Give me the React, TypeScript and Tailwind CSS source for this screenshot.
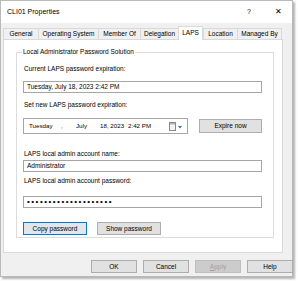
import React from "react"

const tabs = [
  { label: "General", w: "w-[35px]" },
  { label: "Operating System", w: "w-[60px]" },
  { label: "Member Of", w: "w-[42px]" },
  { label: "Delegation", w: "w-[38px]" },
  { label: "LAPS", w: "w-[25px]", active: true },
  { label: "Location", w: "w-[34px]" },
  { label: "Managed By", w: "w-[45px]" },
]

function CalendarIcon() {
  return (
    <svg width="14" height="9" viewBox="0 0 14 9" className="shrink-0">
      <rect x="0.5" y="0.5" width="6" height="8" fill="#f4f4f4" stroke="#8a8a8a" />
      <rect x="1" y="1" width="5" height="1.5" fill="#b5b5b5" />
      <path d="M9 4 L13 4 L11 6.5 Z" fill="#3c6ea8" />
    </svg>
  )
}

function Button({ children, w, primary, disabled }: { children: React.ReactNode; w: string; primary?: boolean; disabled?: boolean }) {
  return (
    <div
      className={`${w} h-[13px] flex items-center justify-center border text-[6.5px] leading-[8px] ${
        primary
          ? "border-[#0078d7] bg-[#e1e6ec]"
          : disabled
          ? "border-[#bfbfbf] bg-[#cccccc] text-[#a0a0a0]"
          : "border-[#adadad] bg-[#e1e1e1]"
      }`}
    >
      {children}
    </div>
  )
}

export default function App() {
  return (
    <div className="w-[300px] h-[283px] bg-white text-black" style={{ fontFamily: '"Liberation Sans", Arial, sans-serif' }}>
      <div className="w-[293px] h-[277px] flex flex-col border border-[#b9b9b9] shadow-[2px_2px_2px_rgba(0,0,0,0.3)]">
        {/* title bar */}
        <div className="h-[22px] bg-white flex items-center pl-[6px] pr-[10px]">
          <span className="text-[7px] leading-[8px]">CLI01 Properties</span>
          <span className="ml-auto text-[7px] leading-[8px] mr-[24px]">?</span>
          <span className="text-[8px] leading-[8px] font-light">✕</span>
        </div>

        {/* body */}
        <div className="flex-1 bg-[#f0f0f0] pl-[2px] pt-[3px] flex flex-col">
          <div className="flex items-end h-[13px]">
            {tabs.map((t) =>
              t.active ? (
                <div
                  key={t.label}
                  className={`${t.w} h-[14px] -mb-[1px] relative z-10 bg-white border border-b-0 border-[#d9d9d9] flex items-center justify-center text-[6.5px] leading-[8px] pb-[2px]`}
                >
                  {t.label}
                </div>
              ) : (
                <div
                  key={t.label}
                  className={`${t.w} h-[11px] bg-[#f0f0f0] border border-b-0 border-r-0 last:border-r border-[#d9d9d9] flex items-center justify-center text-[6.5px] leading-[8px]`}
                >
                  {t.label}
                </div>
              )
            )}
          </div>

          {/* tab panel */}
          <div className="w-[280px] h-[214px] bg-white border border-[#d9d9d9] pl-[12px] pt-[8px]">
            <fieldset className="w-[258px] h-[190px] border border-[#dcdcdc] pl-[6px] pr-[11px]">
              <legend className="ml-[-1px] px-[1px] text-[6.5px] leading-[8px]">Local Administrator Password Solution</legend>

              <div className="mt-[9px] text-[6.5px] leading-[8px] pl-[1px]">Current LAPS password expiration:</div>
              <div className="mt-[8px] h-[12px] border border-[#a6a6a6] flex items-center pl-[3px] text-[6.5px] leading-[8px]">
                Tuesday, July 18, 2023 2:42 PM
              </div>

              <div className="mt-[8px] text-[6.5px] leading-[8px] pl-[1px]">Set new LAPS password expiration:</div>
              <div className="mt-[9px] flex items-center">
                <div className="w-[165px] h-[16px] border border-[#a6a6a6] flex items-center pl-[5px] pr-[4px] text-[6.2px] leading-[8px]">
                  <span className="w-[32px]">Tuesday</span>
                  <span className="w-[15px]">,</span>
                  <span className="w-[24px]">July</span>
                  <span className="w-[28px]">18, 2023</span>
                  <span className="flex-1">2:42 PM</span>
                  <CalendarIcon />
                </div>
                <div className="ml-auto w-[63px] h-[14px] border border-[#adadad] bg-[#e1e1e1] flex items-center justify-center text-[6.5px] leading-[8px]">
                  Expire now
                </div>
              </div>

              <div className="mt-[16px] text-[6.5px] leading-[8px] pl-[1px]">LAPS local admin account name:</div>
              <div className="mt-[2px] h-[12px] border border-[#a6a6a6] flex items-center pl-[3px] text-[6.5px] leading-[8px]">
                Administrator
              </div>

              <div className="mt-[5px] text-[6.5px] leading-[8px] pl-[1px]">LAPS local admin account password:</div>
              <div className="mt-[11px] h-[12px] border border-[#a6a6a6] flex items-center pl-[3px] text-[8px] leading-[8px] tracking-[1.5px]">
                ••••••••••••••••••••
              </div>

              <div className="mt-[14px] flex gap-[10px]">
                <Button w="w-[64px]" primary>Copy password</Button>
                <Button w="w-[64px]">Show password</Button>
              </div>
            </fieldset>
          </div>

          {/* footer */}
          <div className="mt-[7px] flex justify-end gap-[6px] pr-[1px] w-[291px]">
            <Button w="w-[46px]">OK</Button>
            <Button w="w-[46px]">Cancel</Button>
            <Button w="w-[46px]" disabled><span className="underline">A</span>pply</Button>
            <Button w="w-[46px]">Help</Button>
          </div>
        </div>
      </div>
    </div>
  )
}
